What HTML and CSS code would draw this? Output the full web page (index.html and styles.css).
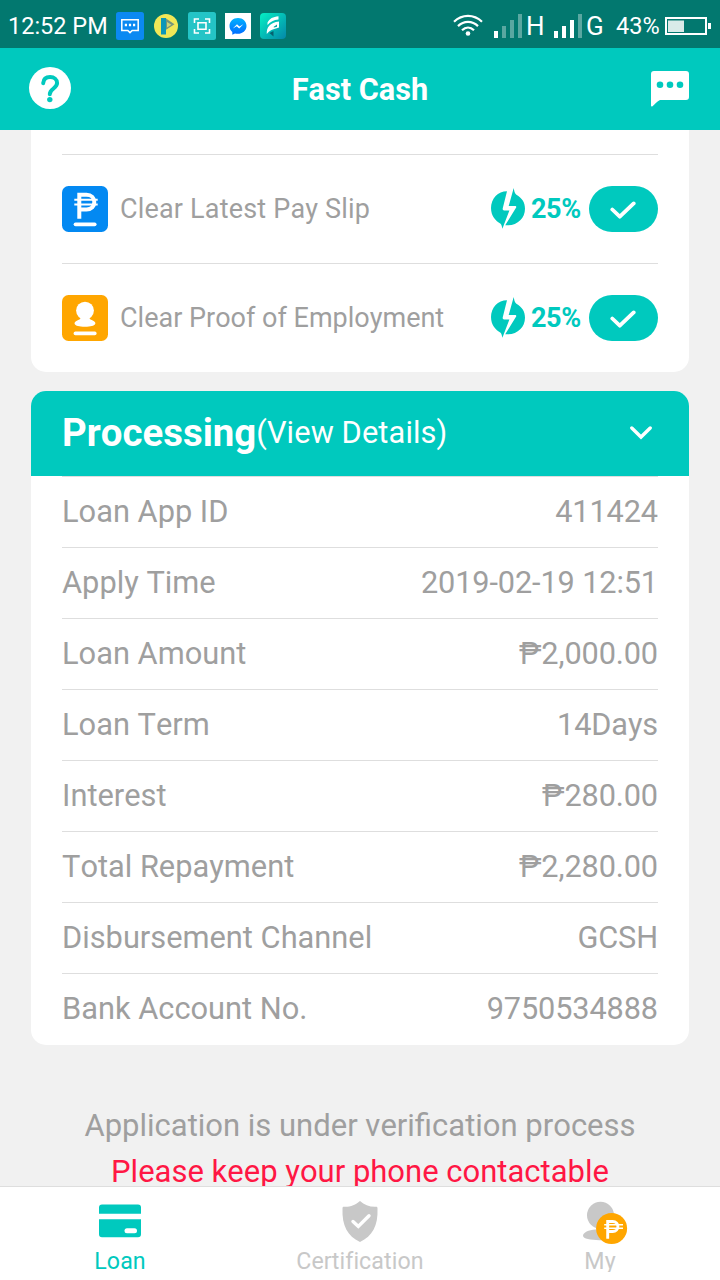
FILE: index.html
```html
<!DOCTYPE html>
<html lang="en">
<head>
    <meta charset="UTF-8" />
    <title>Fast Cash</title>
    <link rel="stylesheet" href="styles.css">
</head>
<body>
    <div class="status-bar">
        <span class="clock">12:52 PM</span>
        <div class="notices">
            <svg width="28" height="28" viewBox="0 0 28 28">
                <rect width="28" height="28" rx="2.5" fill="#0b89f2"/>
                <path d="M5.8 7.8h16.4v10.6h-6l-2.2 2.2-2.2-2.2h-6z" fill="none" stroke="#fff" stroke-width="1.5"/>
                <path d="M8.8 11.8h2.2v2.4H8.8zM12.9 11.8h2.2v2.4h-2.2zM17 11.8h2.2v2.4H17z" fill="#fff"/>
            </svg>
            <svg width="24" height="24" viewBox="0 0 24 24">
                <circle cx="12" cy="12" r="12" fill="#f0e757"/>
                <path d="M7 4h5v16.5H7z" fill="#0c96b8"/>
                <path d="M12 4.5l8.5 5.7-8.5 5.6z" fill="#73947d"/>
                <path d="M13 8l4.5 2.8L13 13.5z" fill="#cbd477"/>
            </svg>
            <svg width="28" height="28" viewBox="0 0 28 28">
                <rect width="28" height="28" rx="2.5" fill="#24c4c6"/>
                <path d="M6.5 11V7H11M17 7h4.500v4M21.500 17v4H17M11 21H6.500v-4M10 10.800h8v6.400h-8z" fill="none" stroke="#fff" stroke-width="1.600"/>
            </svg>
            <svg class="messenger" width="26" height="26" viewBox="0 0 26 26">
                <defs>
                    <linearGradient id="msg" x1="0" y1="0" x2="0" y2="1">
                        <stop offset="0" stop-color="#00b2ff"/>
                        <stop offset="1" stop-color="#006aff"/>
                    </linearGradient>
                </defs>
                <rect width="26" height="26" fill="#fff"/>
                <path d="M13 5c-4.900 0-8.500 3.500-8.500 8 0 2.500 1.100 4.600 2.800 6v2.800l2.700-1.400c5.500 1.500 11.500-1.700 11.500-7.400C21.500 8.500 17.900 5 13 5z" fill="url(#msg)"/>
                <path d="M7.800 15.400l4.200-4.100 2.400 2.200 3.900-2.200-4.100 4.200-2.500-2.200z" fill="#fff"/>
            </svg>
            <svg width="26" height="26" viewBox="0 0 26 26">
                <defs>
                    <linearGradient id="feather" x1="0" y1="0" x2="1" y2="1">
                        <stop offset="0" stop-color="#04f0c4"/>
                        <stop offset="1" stop-color="#0487a8"/>
                    </linearGradient>
                </defs>
                <rect width="26" height="26" rx="4" fill="url(#feather)"/>
                <path d="M9.500 20l4-2v5.500z" fill="#06606f"/>
                <path d="M7.500 9.500C9.500 5.500 13 3.700 18.500 3.200v3.300C13.500 7 10.500 8.500 7.500 12zM6.800 21c-.5-6.500 3-11.500 12.200-12.500v6l-5.500 1.700c-3 .9-4.500 2.300-6.700 4.800z" fill="#fff"/>
                <path d="M13.500 14l3.500-2.500v2.200l-3 .9z" fill="#05a5a0"/>
            </svg>
        </div>
        <div class="signals">
            <svg class="wifi" width="30" height="23" viewBox="0 0 30 23">
                <g fill="none" stroke="#fff" stroke-width="2.200">
                    <path d="M1 7.800c8.200-7.800 19.800-7.800 28 0"/>
                    <path d="M5 12.100c5.800-5.600 14.200-5.600 20 0"/>
                    <path d="M9 16.300c3.600-3.500 8.400-3.500 12 0"/>
                </g>
                <circle cx="15" cy="19.500" r="2.300" fill="#fff"/>
            </svg>
            <svg class="bars" width="28" height="24" viewBox="0 0 28 24" fill="#fff">
                <path d="M0 17h4v7H0z"/>
                <path d="M8 12h4v12H8zM16 6h4v18h-4zM24 0h4v24h-4z" opacity=".35"/>
            </svg>
            <span class="net net-h">H</span>
            <svg class="bars" width="28" height="24" viewBox="0 0 28 24" fill="#fff">
                <path d="M0 17h4v7H0zM8 12h4v12H8zM16 6h4v18h-4z"/>
                <path d="M24 0h4v24h-4z" opacity=".35"/>
            </svg>
            <span class="net net-g">G</span>
            <span class="percent">43%</span>
            <svg class="battery" width="46" height="18" viewBox="0 0 46 18">
                <rect x="1" y="1" width="40" height="16" fill="none" stroke="#fff" stroke-width="2"/>
                <path d="M3 3.500h16v11.500H3z" fill="#fff" opacity=".85"/>
                <path d="M43 6h3v6h-3z" fill="#fff"/>
            </svg>
        </div>
    </div>

    <header class="header">
        <svg width="42" height="42" viewBox="0 0 42 42">
            <circle cx="21" cy="21" r="21" fill="#fff"/>
            <path d="M14.200 16.200c.3-4 3-6.100 6.900-6.100 4 0 7 2.400 7 6 0 5.400-7.300 5.400-7.300 11.200" fill="none" stroke="#00c9be" stroke-width="4" stroke-linecap="round"/>
            <circle cx="20.800" cy="32.600" r="2.700" fill="#00c9be"/>
        </svg>
        <h1>Fast Cash</h1>
        <svg class="chat" width="38" height="36" viewBox="0 0 38 36">
            <path d="M3 0h32a3 3 0 0 1 3 3v23a3 3 0 0 1-3 3H9c-3 1.200-4.800 4.200-7.500 6.200C.6 35.700 0 35.300 0 34.500V3a3 3 0 0 1 3-3z" fill="#fff"/>
            <g fill="#00c9be">
                <circle cx="9" cy="13.800" r="3.300"/>
                <circle cx="19" cy="13.800" r="3.300"/>
                <circle cx="29" cy="13.800" r="3.300"/>
            </g>
        </svg>
    </header>

    <main class="content">
        <section class="card tasks">
            <div class="task">
                <svg class="task-icon" width="46" height="46" viewBox="0 0 46 46">
                    <rect width="46" height="46" rx="6.500" fill="#0389f2"/>
                    <g fill="none" stroke="#fff">
                        <path d="M17.300 32.800V8.800h7.200c5 0 7.800 3.200 7.800 7.300s-2.800 7.400-7.800 7.400h-7.200" stroke-width="4"/>
                        <path d="M12.300 13.700h23.400M12.300 18.500h23.400" stroke-width="2.100"/>
                        <path d="M13.500 38.300h19.200" stroke-width="3.700" stroke-linecap="round"/>
                    </g>
                </svg>
                <span class="task-name payslip">Clear Latest Pay Slip</span>
                <svg class="bolt" width="34" height="41" viewBox="0 0 34 41" fill="#00c9be">
                    <path d="M16 3.200C7 3.200 0 10.600 0 20c0 8 4.500 12.800 9.600 15.700 1.100 1.400 1.300 3 1.800 5.100L18.400 22.400h-5.200c-1.200 0-1.700-.8-1.500-1.900z"/>
                    <path d="M22.700 0l-5 17.900h6.400c1.100 0 1.500.9.900 1.800L14.200 37.300C25.600 38.200 34 30.700 34 20.700c0-6.300-3-10.700-8.600-13.900-1.800-1.800-2.200-3.700-2.700-6.800z"/>
                </svg>
                <b class="rate">25%</b>
                <span class="done">
                    <svg width="26" height="18" viewBox="0 0 26 18"><path d="M2.300 8.500l7.500 7.200L23.700 2.400" fill="none" stroke="#fff" stroke-width="3.800" stroke-linecap="round" stroke-linejoin="round"/></svg>
                </span>
            </div>
            <div class="task">
                <svg class="task-icon" width="46" height="46" viewBox="0 0 46 46">
                    <rect width="46" height="46" rx="6.500" fill="#ffa600"/>
                    <g fill="#fff">
                        <circle cx="23" cy="15.600" r="8.900"/>
                        <path d="M18.500 22h9c-.2 2 .5 2.300 2.200 3 6 2.300 5.300 6.800-6.700 6.800s-12.700-4.500-6.700-6.800c1.700-.7 2.400-1 2.200-3z"/>
                        <rect x="11.600" y="36.400" width="23" height="3.800" rx="1.800"/>
                    </g>
                </svg>
                <span class="task-name">Clear Proof of Employment</span>
                <svg class="bolt" width="34" height="41" viewBox="0 0 34 41" fill="#00c9be">
                    <path d="M16 3.200C7 3.200 0 10.600 0 20c0 8 4.500 12.800 9.600 15.700 1.100 1.400 1.300 3 1.800 5.100L18.400 22.400h-5.200c-1.200 0-1.700-.8-1.500-1.900z"/>
                    <path d="M22.700 0l-5 17.900h6.400c1.100 0 1.500.9.900 1.800L14.200 37.300C25.600 38.200 34 30.700 34 20.700c0-6.300-3-10.700-8.600-13.900-1.800-1.800-2.200-3.700-2.700-6.800z"/>
                </svg>
                <b class="rate">25%</b>
                <span class="done">
                    <svg width="26" height="18" viewBox="0 0 26 18"><path d="M2.300 8.500l7.500 7.200L23.700 2.400" fill="none" stroke="#fff" stroke-width="3.800" stroke-linecap="round" stroke-linejoin="round"/></svg>
                </span>
            </div>
        </section>

        <section class="card loan">
            <div class="loan-head">
                <h2>Processing</h2>
                <span class="view">(View Details)</span>
                <svg width="22" height="14" viewBox="0 0 22 14"><path d="M1.800 2l9.200 9 9.200-9" fill="none" stroke="#fff" stroke-width="3.400" stroke-linecap="round"/></svg>
            </div>
            <div class="row"><span>Loan App ID</span><span class="value">411424</span></div>
            <div class="row"><span>Apply Time</span><span class="value">2019-02-19 12:51</span></div>
            <div class="row"><span>Loan Amount</span><span class="value">₱2,000.00</span></div>
            <div class="row"><span>Loan Term</span><span class="value">14Days</span></div>
            <div class="row"><span>Interest</span><span class="value">₱280.00</span></div>
            <div class="row"><span>Total Repayment</span><span class="value">₱2,280.00</span></div>
            <div class="row"><span>Disbursement Channel</span><span class="value">GCSH</span></div>
            <div class="row"><span>Bank Account No.</span><span class="value">9750534888</span></div>
        </section>

        <div class="message">
            <p>Application is under verification process</p>
            <p class="warn">Please keep your phone contactable</p>
        </div>
    </main>

    <nav class="tabs">
        <a class="tab active">
            <svg width="42" height="42" viewBox="0 0 42 42" fill="#00c9be">
                <path d="M3 3.500h36a3 3 0 0 1 3 3v6.200H0V6.500a3 3 0 0 1 3-3z"/>
                <path d="M0 18.200h42v15a3 3 0 0 1-3 3H3a3 3 0 0 1-3-3z"/>
                <rect x="25.500" y="27.200" width="12.500" height="5" rx="2.500" fill="#fff"/>
            </svg>
            <span>Loan</span>
        </a>
        <a class="tab">
            <svg width="42" height="42" viewBox="0 0 42 42">
                <path d="M21 0c4.500 3.700 9.500 6.100 16 5.800 1.200 0 1.500.5 1.500 1.500C39.200 25 33.500 35 21 41 8.500 35 2.800 25 3.500 7.300c0-1 .3-1.500 1.500-1.500C11.500 6.100 16.500 3.700 21 0z" fill="#c8c8c8"/>
                <path d="M14 20.500l5.300 5L30 14.800" fill="none" stroke="#fff" stroke-width="3.400" stroke-linecap="round"/>
            </svg>
            <span>Certification</span>
        </a>
        <a class="tab">
            <svg class="person" width="46" height="42" viewBox="0 0 46 42">
                <circle cx="18.500" cy="14.300" r="13.500" fill="#c8c8c8"/>
                <path d="M1 34.800c0-3.300 5.500-5.800 12.500-6.200H30V38C18 40.500 1 39 1 34.800z" fill="#c8c8c8"/>
                <circle cx="29.600" cy="27.500" r="15.500" fill="#ffa600"/>
                <g fill="none" stroke="#fff">
                    <path d="M25.700 37.700V20.500h5c3.300 0 5.200 2.200 5.200 5s-1.900 5-5.200 5h-5" stroke-width="2.900"/>
                    <path d="M22.200 23.700h18.800M22.200 27.300h18.800" stroke-width="1.600"/>
                </g>
            </svg>
            <span>My</span>
        </a>
    </nav>
</body>
</html>
```

FILE: styles.css
```css
*{
    padding: 0;
    margin: 0;
    box-sizing: border-box;
}
body{
    width: 720px;
    height: 1280px;
    overflow: hidden;
    display: flex;
    flex-direction: column;
    background-color: #f1f1f1;
    font-family: "Roboto", sans-serif;
    font-kerning: none;
    color: #9f9f9f;
}
svg{
    display: block;
    flex-shrink: 0;
}
.status-bar{
    height: 48px;
    flex-shrink: 0;
    display: flex;
    align-items: center;
    justify-content: space-between;
    padding: 3px 9px 0 8px;
    background-color: #02786f;
    color: #fff;
    font-size: 23.5px;
}
.clock{
    width: 108px;
    white-space: nowrap;
}
.notices{
    display: flex;
    align-items: center;
    gap: 10px;
    margin-right: auto;
}
.messenger{
    margin: 0 -1px;
}
.signals{
    display: flex;
    align-items: center;
}
.wifi{
    margin-right: 11px;
}
.net-h{
    width: 32px;
    padding-left: 4px;
    font-size: 26px;
}
.net-g{
    width: 34px;
    padding-left: 4px;
    font-size: 26px;
}
.percent{
    width: 49px;
}
.header{
    height: 82px;
    flex-shrink: 0;
    display: flex;
    align-items: center;
    justify-content: space-between;
    padding: 0 31px 2px 29px;
    background-color: #00c9be;
    color: #fff;
}
.header h1{
    font-size: 30.7px;
    font-weight: 700;
    padding: 3px 2px 0 0;
}
.chat{
    margin-top: 2px;
}
.content{
    flex: 1;
    min-height: 0;
    overflow: hidden;
    padding: 0 31px;
}
.card{
    background-color: #fff;
    border-radius: 15px;
    overflow: hidden;
}
.tasks{
    padding: 24px 31px 0;
    border-radius: 0 0 15px 15px;
    margin-bottom: 19px;
}
.task{
    height: 109px;
    display: flex;
    align-items: center;
    border-top: 1px solid #dedede;
}
.task-name{
    flex: 1;
    padding-left: 12px;
    font-size: 27px;
}
.payslip{
    letter-spacing: .18px;
}
.bolt{
    margin-bottom: 1px;
}
.rate{
    width: 64px;
    padding-left: 6px;
    color: #00c9be;
    font-size: 27px;
    letter-spacing: -.4px;
}
.done{
    width: 69px;
    height: 46px;
    display: flex;
    align-items: center;
    justify-content: center;
    padding: 2px 1px 0 0;
    border-radius: 23px;
    background-color: #00c9be;
}
.loan{
    height: 654px;
}
.loan-head{
    height: 85px;
    display: flex;
    align-items: center;
    padding: 0 37px 2px 31px;
    background-color: #00c9be;
    color: #fff;
}
.loan-head h2{
    font-size: 38.4px;
}
.view{
    flex: 1;
    font-size: 30.8px;
    letter-spacing: .1px;
}
.row{
    height: 71px;
    display: flex;
    align-items: center;
    justify-content: space-between;
    margin: 0 31px;
    padding-bottom: 2px;
    border-top: 1px solid #dedede;
    font-size: 30.8px;
}
.value{
    font-size: 30.7px;
    letter-spacing: -.12px;
}
.message{
    padding-top: 58px;
    text-align: center;
    font-size: 31px;
    line-height: 46px;
}
.warn{
    color: #ff1744;
}
.tabs{
    height: 94px;
    flex-shrink: 0;
    display: flex;
    padding-top: 14px;
    border-top: 1px solid #dedede;
    background-color: #fff;
}
.tab{
    flex: 1;
    height: 71px;
    overflow: hidden;
    display: flex;
    flex-direction: column;
    align-items: center;
    color: #c8c8c8;
    font-size: 23.2px;
}
.tab span{
    padding-top: 4px;
    letter-spacing: .1px;
}
.active{
    color: #00c9be;
}
.person{
    margin-left: 10px;
    overflow: visible;
}
```
